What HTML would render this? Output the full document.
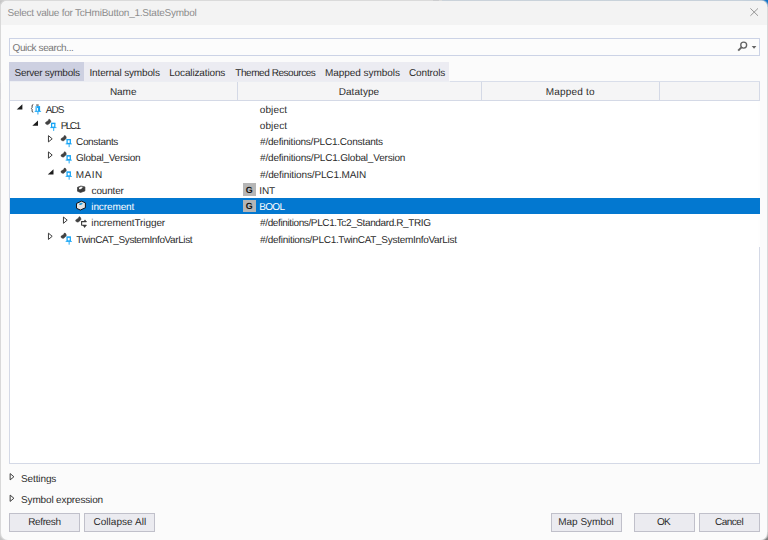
<!DOCTYPE html>
<html><head><meta charset="utf-8">
<style>
*{box-sizing:border-box;margin:0;padding:0}
html,body{width:768px;height:540px;overflow:hidden;background:#c4c4c4;font-family:"Liberation Sans",sans-serif;font-size:10px}
#dlg{position:absolute;left:1.3px;top:1px;width:765.5px;height:538.5px;background:#fbfbfb;border-radius:6px 6px 7px 7px;overflow:hidden;box-shadow:0 0 1.2px 0.3px #dcdcdc}
#title{position:absolute;left:0;top:0;width:100%;height:23.8px;background:#f3f3f3}
.a{position:absolute}
.t{position:absolute;white-space:pre;font-size:10px;line-height:10px;text-rendering:geometricPrecision}
svg{position:absolute;left:0;top:0}
</style></head><body>
<div class="a" style="left:0;top:0;width:768px;height:1px;background:linear-gradient(to right,#cacaca 0,#cacaca 433px,#6a6f80 433px,#6a6f80 439px,#d0d0d0 439px,#d0d0d0 442px,#5f97c8 442px,#4a8fd0 740px,#0b6fc7 760px)"></div>
<div class="a" style="left:758px;top:0;width:10px;height:7px;background:#0b6fc7"></div>
<div class="a" style="left:0;top:83px;width:1.2px;height:15.5px;background:#a6a6b8"></div>
<div class="a" style="left:760px;top:532px;width:8px;height:8px;background:#7c7c7c"></div>
<div id="dlg"><div id="title"></div></div>
<div class="a" style="left:9px;top:38.4px;width:750.6px;height:17.3px;border:1px solid #ccd3e6;background:#fcfcfc"></div>
<div class="a" style="left:9.2px;top:62.3px;width:440.3px;height:19px;background:#ececf2"></div>
<div class="a" style="left:9.2px;top:62.3px;width:75.3px;height:19px;background:#cdd0e1"></div>
<div class="a" style="left:9px;top:80.6px;width:750.8px;height:383.9px;border:1px solid #d4d9e6;background:#fff"></div>
<div class="a" style="left:10px;top:80.8px;width:748.8px;height:19.8px;background:#f5f5f6;border-bottom:1px solid #d4d9e6;border-top:1px solid #eceef3"></div>
<div class="a" style="left:449.5px;top:80.6px;width:310.2px;height:1px;background:#d9deea"></div>
<div class="a" style="left:237px;top:81.6px;width:1px;height:18.5px;background:#d4d9e6"></div>
<div class="a" style="left:481px;top:81.6px;width:1px;height:18.5px;background:#d4d9e6"></div>
<div class="a" style="left:659px;top:81.6px;width:1px;height:18.5px;background:#d4d9e6"></div>
<div class="a" style="left:758.4px;top:101.4px;width:1.5px;height:145.4px;background:#fefefe"></div>
<div class="a" style="left:10.1px;top:198.1px;width:749.6px;height:15.6px;background:#0378d0"></div>
<div class="a" style="left:243px;top:183.1px;width:12.9px;height:12.8px;background:#b6b6b6"></div>
<div class="a" style="left:243px;top:199.6px;width:12.9px;height:12.6px;background:#b6b5b5"></div>
<div class="a" style="left:9.1px;top:512.7px;width:70.6px;height:19.1px;background:#ebebf0;border:1px solid #c0c0ca"></div>
<div class="a" style="left:84.4px;top:512.7px;width:71px;height:19.1px;background:#ebebf0;border:1px solid #c0c0ca"></div>
<div class="a" style="left:551.4px;top:512.7px;width:70.4px;height:19.1px;background:#ebebf0;border:1px solid #c0c0ca"></div>
<div class="a" style="left:634px;top:512.7px;width:61px;height:19.1px;background:#ebebf0;border:1px solid #c0c0ca"></div>
<div class="a" style="left:699.2px;top:512.7px;width:60.7px;height:19.1px;background:#ebebf0;border:1px solid #c0c0ca"></div>
<svg width="768" height="540" viewBox="0 0 768 540">
<polygon points="22.40,104.20 22.40,109.50 16.70,109.50" fill="#1c1c1c"/>
<path d="M33.3 104.5 q-1.3 0.1 -1.2 1.5 q0.3 2.0 -0.7 2.4 q1.0 0.4 0.7 2.4 q-0.1 1.4 1.2 1.5" fill="none" stroke="#444" stroke-width="1"/>
<rect x="36.2" y="104.2" width="2.5" height="1.9" fill="#8a8a8a"/>
<rect x="35.4" y="106.1" width="4.7" height="5.3" fill="#14a4f6"/>
<rect x="35.4" y="106.1" width="1.3" height="4.8" fill="#fff" opacity="0.45"/>
<rect x="37.05" y="108" width="1.0" height="2.9" fill="#fff"/>
<rect x="34.7" y="110.9" width="6.4" height="1.0" fill="#14a4f6" opacity="0.85"/>
<rect x="37.1" y="111.8" width="1.6" height="2.7" fill="#14a4f6" opacity="0.6"/>
<polygon points="38.00,120.50 38.00,125.80 32.30,125.80" fill="#1c1c1c"/>
<path d="M45.40 122.60 L46.40 121.80 L48.10 120.80 L48.80 119.30 L49.70 119.30 L50.50 120.30 L50.90 121.80 L49.80 123.20 L47.80 124.70 L46.80 124.50 L45.60 123.80 Z" fill="#424242" stroke="#424242" stroke-width="0.4" stroke-linejoin="round"/><rect x="51.60" y="123.45" width="3.2" height="3.8" fill="none" stroke="#14a4f6" stroke-width="1.25"/><rect x="51.00" y="122.80" width="4.4" height="0.7" fill="#14a4f6"/><rect x="50.10" y="127.20" width="6.4" height="0.9" fill="#14a4f6" opacity="0.8"/><rect x="53.10" y="127.90" width="1.1" height="3.0" fill="#14a4f6" opacity="0.85"/>
<polygon points="48.45,135.65 52.20,138.80 48.45,141.95" fill="none" stroke="#3c3c3c" stroke-width="1" stroke-linejoin="miter"/>
<path d="M60.90 138.85 L61.90 138.05 L63.60 137.05 L64.30 135.55 L65.20 135.55 L66.00 136.55 L66.40 138.05 L65.30 139.45 L63.30 140.95 L62.30 140.75 L61.10 140.05 Z" fill="#424242" stroke="#424242" stroke-width="0.4" stroke-linejoin="round"/><rect x="67.10" y="139.70" width="3.2" height="3.8" fill="none" stroke="#14a4f6" stroke-width="1.25"/><rect x="66.50" y="139.05" width="4.4" height="0.7" fill="#14a4f6"/><rect x="65.60" y="143.45" width="6.4" height="0.9" fill="#14a4f6" opacity="0.8"/><rect x="68.60" y="144.15" width="1.1" height="3.0" fill="#14a4f6" opacity="0.85"/>
<polygon points="48.45,151.90 52.20,155.05 48.45,158.20" fill="none" stroke="#3c3c3c" stroke-width="1" stroke-linejoin="miter"/>
<path d="M60.90 155.10 L61.90 154.30 L63.60 153.30 L64.30 151.80 L65.20 151.80 L66.00 152.80 L66.40 154.30 L65.30 155.70 L63.30 157.20 L62.30 157.00 L61.10 156.30 Z" fill="#424242" stroke="#424242" stroke-width="0.4" stroke-linejoin="round"/><rect x="67.10" y="155.95" width="3.2" height="3.8" fill="none" stroke="#14a4f6" stroke-width="1.25"/><rect x="66.50" y="155.30" width="4.4" height="0.7" fill="#14a4f6"/><rect x="65.60" y="159.70" width="6.4" height="0.9" fill="#14a4f6" opacity="0.8"/><rect x="68.60" y="160.40" width="1.1" height="3.0" fill="#14a4f6" opacity="0.85"/>
<polygon points="48.45,233.15 52.20,236.30 48.45,239.45" fill="none" stroke="#3c3c3c" stroke-width="1" stroke-linejoin="miter"/>
<path d="M60.90 236.35 L61.90 235.55 L63.60 234.55 L64.30 233.05 L65.20 233.05 L66.00 234.05 L66.40 235.55 L65.30 236.95 L63.30 238.45 L62.30 238.25 L61.10 237.55 Z" fill="#424242" stroke="#424242" stroke-width="0.4" stroke-linejoin="round"/><rect x="67.10" y="237.20" width="3.2" height="3.8" fill="none" stroke="#14a4f6" stroke-width="1.25"/><rect x="66.50" y="236.55" width="4.4" height="0.7" fill="#14a4f6"/><rect x="65.60" y="240.95" width="6.4" height="0.9" fill="#14a4f6" opacity="0.8"/><rect x="68.60" y="241.65" width="1.1" height="3.0" fill="#14a4f6" opacity="0.85"/>
<polygon points="53.50,169.25 53.50,174.55 47.80,174.55" fill="#1c1c1c"/>
<path d="M60.90 171.35 L61.90 170.55 L63.60 169.55 L64.30 168.05 L65.20 168.05 L66.00 169.05 L66.40 170.55 L65.30 171.95 L63.30 173.45 L62.30 173.25 L61.10 172.55 Z" fill="#424242" stroke="#424242" stroke-width="0.4" stroke-linejoin="round"/><rect x="67.10" y="172.20" width="3.2" height="3.8" fill="none" stroke="#14a4f6" stroke-width="1.25"/><rect x="66.50" y="171.55" width="4.4" height="0.7" fill="#14a4f6"/><rect x="65.60" y="175.95" width="6.4" height="0.9" fill="#14a4f6" opacity="0.8"/><rect x="68.60" y="176.65" width="1.1" height="3.0" fill="#14a4f6" opacity="0.85"/>
<polygon points="77.50,187.30 80.90,186.00 84.90,186.90 84.90,190.90 80.50,192.50 77.50,191.20" fill="#3b3b3b" stroke="#3b3b3b" stroke-width="0.7" stroke-linejoin="round"/>
<polygon points="78,187.20 80.9,186.10 84.4,186.90 81.3,188.30" fill="#8c8c8c" opacity="0.55"/>
<ellipse cx="80.7" cy="188.00" rx="1.9" ry="0.95" fill="#fafafa" transform="rotate(-20 80.7 188.00)"/>
<polygon points="76.50,203.45 81.50,201.15 85.40,202.85 85.40,207.75 80.30,210.05 76.50,208.25" fill="#e3e3e3" stroke="#0c0c10" stroke-width="0.95" stroke-linejoin="round"/>
<ellipse cx="80.9" cy="203.85" rx="1.9" ry="1.0" fill="#1d9ad8" transform="rotate(-20 80.9 203.85)"/>
<polygon points="63.45,217.00 67.20,220.15 63.45,223.30" fill="none" stroke="#3c3c3c" stroke-width="1" stroke-linejoin="miter"/>
<path d="M75.60 220.10 L76.60 219.30 L78.30 218.30 L79.00 216.80 L79.90 216.80 L80.70 217.80 L81.10 219.30 L80.00 220.70 L78.00 222.20 L77.00 222.00 L75.80 221.30 Z" fill="#424242" stroke="#424242" stroke-width="0.4" stroke-linejoin="round"/>
<path d="M81.6 220.9 V225.6 M81.6 221.6 H86.4 M81.6 225.3 H86.4" fill="none" stroke="#3a3a3a" stroke-width="1.1"/>
<polygon points="83.2,222.0 85.0,219.6 86.8,222.0" fill="#3a3a3a"/>
<polygon points="82.6,224.9 86.8,224.9 84.6,227.9" fill="#3a3a3a"/>
<polygon points="10.15,473.60 13.90,476.75 10.15,479.90" fill="none" stroke="#3c3c3c" stroke-width="1" stroke-linejoin="miter"/>
<polygon points="10.15,495.10 13.90,498.25 10.15,501.40" fill="none" stroke="#3c3c3c" stroke-width="1" stroke-linejoin="miter"/>
<path d="M750.4 8.4 l7.6 7.4 M758 8.4 l-7.6 7.4" stroke="#8c8c8c" stroke-width="0.9" fill="none"/>
<circle cx="743.7" cy="45.1" r="2.95" fill="none" stroke="#646464" stroke-width="1.35"/><path d="M741.7 47.2 l-3.5 3.5" stroke="#646464" stroke-width="1.9"/><polygon points="751.7,46.1 756.4,46.1 754.05,48.7" fill="#646464"/>
</svg>
<span class="t" style="left:7.50px;top:9.00px;letter-spacing:-0.234px;color:#8c8c8c">Select value for TcHmiButton_1.StateSymbol</span>
<span class="t" style="left:12.50px;top:44.00px;letter-spacing:-0.379px;color:#767676">Quick search...</span>
<span class="t" style="left:14.50px;top:69.00px;letter-spacing:-0.269px;color:#2c2c2c">Server symbols</span>
<span class="t" style="left:89.50px;top:69.00px;letter-spacing:-0.160px;color:#2c2c2c">Internal symbols</span>
<span class="t" style="left:169.20px;top:69.00px;letter-spacing:-0.142px;color:#2c2c2c">Localizations</span>
<span class="t" style="left:235.30px;top:69.00px;letter-spacing:-0.447px;color:#2c2c2c">Themed Resources</span>
<span class="t" style="left:324.95px;top:69.00px;letter-spacing:-0.050px;color:#2c2c2c">Mapped symbols</span>
<span class="t" style="left:409.00px;top:69.00px;letter-spacing:-0.129px;color:#2c2c2c">Controls</span>
<span class="t" style="left:109.95px;top:88.00px;letter-spacing:-0.050px;color:#2c2c2c">Name</span>
<span class="t" style="left:338.70px;top:88.00px;letter-spacing:0.064px;color:#2c2c2c">Datatype</span>
<span class="t" style="left:545.70px;top:88.00px;letter-spacing:0.188px;color:#2c2c2c">Mapped to</span>
<span class="t" style="left:45.75px;top:106.00px;letter-spacing:-0.925px;color:#2c2c2c">ADS</span>
<span class="t" style="left:60.70px;top:122.00px;letter-spacing:-1.567px;color:#2c2c2c">PLC1</span>
<span class="t" style="left:76.00px;top:138.00px;letter-spacing:-0.338px;color:#2c2c2c">Constants</span>
<span class="t" style="left:76.00px;top:154.00px;letter-spacing:-0.246px;color:#2c2c2c">Global_Version</span>
<span class="t" style="left:75.70px;top:171.00px;letter-spacing:0.533px;color:#2c2c2c">MAIN</span>
<span class="t" style="left:91.60px;top:187.00px;letter-spacing:-0.175px;color:#2c2c2c">counter</span>
<span class="t" style="left:91.30px;top:203.00px;letter-spacing:-0.106px;color:#ffffff">increment</span>
<span class="t" style="left:91.30px;top:219.00px;letter-spacing:-0.087px;color:#2c2c2c">incrementTrigger</span>
<span class="t" style="left:76.30px;top:236.00px;letter-spacing:-0.396px;color:#2c2c2c">TwinCAT_SystemInfoVarList</span>
<span class="t" style="left:259.70px;top:106.00px;letter-spacing:0.140px;color:#2c2c2c">object</span>
<span class="t" style="left:259.70px;top:122.00px;letter-spacing:0.140px;color:#2c2c2c">object</span>
<span class="t" style="left:260.10px;top:138.00px;letter-spacing:-0.220px;color:#2c2c2c">#/definitions/PLC1.Constants</span>
<span class="t" style="left:260.10px;top:154.00px;letter-spacing:-0.203px;color:#2c2c2c">#/definitions/PLC1.Global_Version</span>
<span class="t" style="left:260.10px;top:171.00px;letter-spacing:-0.132px;color:#2c2c2c">#/definitions/PLC1.MAIN</span>
<span class="t" style="left:259.30px;top:187.00px;letter-spacing:-0.100px;color:#2c2c2c">INT</span>
<span class="t" style="left:259.30px;top:203.00px;letter-spacing:-0.700px;color:#ffffff">BOOL</span>
<span class="t" style="left:260.10px;top:219.00px;letter-spacing:-0.384px;color:#2c2c2c">#/definitions/PLC1.Tc2_Standard.R_TRIG</span>
<span class="t" style="left:260.10px;top:236.00px;letter-spacing:-0.298px;color:#2c2c2c">#/definitions/PLC1.TwinCAT_SystemInfoVarList</span>
<span class="t" style="left:245.74px;top:185.87px;letter-spacing:0.248px;color:#111111;font-weight:700;font-size:8.9px;line-height:8.9px">G</span>
<span class="t" style="left:245.74px;top:202.07px;letter-spacing:0.248px;color:#111111;font-weight:700;font-size:8.9px;line-height:8.9px">G</span>
<span class="t" style="left:21.00px;top:475.00px;letter-spacing:-0.114px;color:#2c2c2c">Settings</span>
<span class="t" style="left:21.00px;top:496.00px;letter-spacing:-0.144px;color:#2c2c2c">Symbol expression</span>
<span class="t" style="left:28.20px;top:518.00px;letter-spacing:-0.367px;color:#2c2c2c">Refresh</span>
<span class="t" style="left:93.50px;top:518.00px;letter-spacing:0.036px;color:#2c2c2c">Collapse All</span>
<span class="t" style="left:558.20px;top:518.00px;letter-spacing:-0.011px;color:#2c2c2c">Map Symbol</span>
<span class="t" style="left:657.00px;top:518.00px;letter-spacing:-0.800px;color:#2c2c2c">OK</span>
<span class="t" style="left:715.00px;top:518.00px;letter-spacing:-0.500px;color:#2c2c2c">Cancel</span>
</body></html>
